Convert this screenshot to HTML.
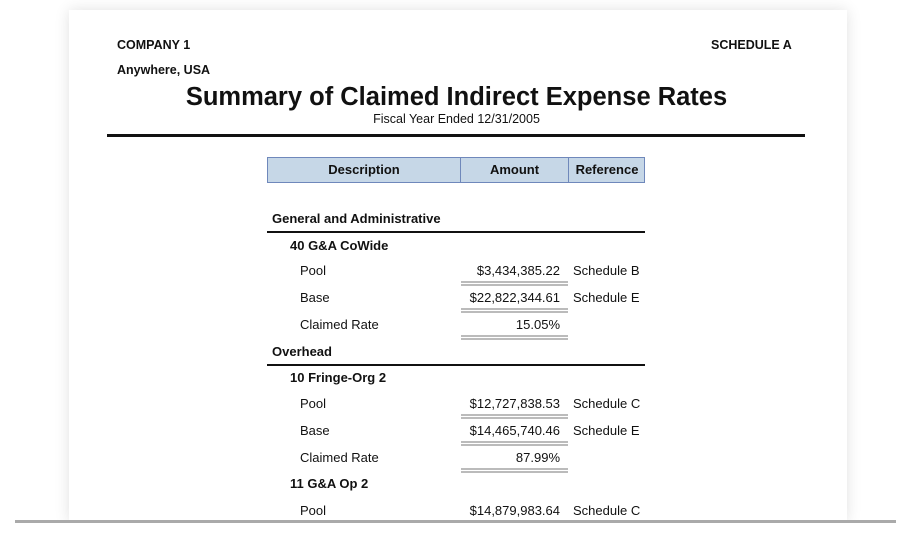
<!DOCTYPE html>
<html><head><style>
*{margin:0;padding:0}
body{width:915px;height:547px;background:#fff;position:relative;overflow:hidden;font-family:"Liberation Sans",Arial,sans-serif;color:#111}
.card{position:absolute;left:69px;top:10px;width:778px;height:512px;background:#fff;box-shadow:0 0 14px rgba(0,0,0,0.12)}
.t{position:absolute;white-space:nowrap;font-size:13px;line-height:16px}
.b{font-weight:bold}
.r{text-align:right}
.ul{position:absolute;left:461px;width:107px;border-top:2px solid #bbb;border-bottom:2px solid #bbb;height:1px}
.hl{position:absolute;left:267px;width:378px;height:2px;background:#111}
</style></head><body>
<div class="card"></div>
<div class="t b" style="left:117px;top:37px;font-size:12.5px">COMPANY 1</div>
<div class="t b" style="left:711px;top:37px;font-size:12.5px">SCHEDULE A</div>
<div class="t b" style="left:117px;top:62px;font-size:12.5px">Anywhere, USA</div>
<div class="t b" style="left:0;width:913px;text-align:center;top:82px;font-size:25.5px;line-height:30px">Summary of Claimed Indirect Expense Rates</div>
<div class="t" style="left:0;width:913px;text-align:center;top:111px;font-size:12.5px">Fiscal Year Ended 12/31/2005</div>
<div style="position:absolute;left:107px;top:134px;width:698px;height:3px;background:#111"></div>

<div style="position:absolute;left:267px;top:157px;width:376px;height:24px;background:#c6d7e7;border:1px solid #6f88bb"></div>
<div style="position:absolute;left:460px;top:157px;width:1px;height:26px;background:#6f88bb"></div>
<div style="position:absolute;left:568px;top:157px;width:1px;height:26px;background:#6f88bb"></div>
<div class="t b" style="left:267px;width:194px;text-align:center;top:162px">Description</div>
<div class="t b" style="left:461px;width:107px;text-align:center;top:162px">Amount</div>
<div class="t b" style="left:569px;width:76px;text-align:center;top:162px">Reference</div>

<div class="t b" style="left:272px;top:211px">General and Administrative</div>
<div class="hl" style="top:231px"></div>
<div class="t b" style="left:290px;top:238px">40 G&amp;A CoWide</div>
<div class="t" style="left:300px;top:263px">Pool</div>
<div class="t r" style="left:440px;width:120px;top:263px">$3,434,385.22</div>
<div class="t" style="left:573px;top:263px">Schedule B</div>
<div class="ul" style="top:281px"></div>
<div class="t" style="left:300px;top:290px">Base</div>
<div class="t r" style="left:440px;width:120px;top:290px">$22,822,344.61</div>
<div class="t" style="left:573px;top:290px">Schedule E</div>
<div class="ul" style="top:308px"></div>
<div class="t" style="left:300px;top:317px">Claimed Rate</div>
<div class="t r" style="left:440px;width:120px;top:317px">15.05%</div>
<div class="ul" style="top:335px"></div>
<div class="t b" style="left:272px;top:344px">Overhead</div>
<div class="hl" style="top:364px"></div>
<div class="t b" style="left:290px;top:370px">10 Fringe-Org 2</div>
<div class="t" style="left:300px;top:396px">Pool</div>
<div class="t r" style="left:440px;width:120px;top:396px">$12,727,838.53</div>
<div class="t" style="left:573px;top:396px">Schedule C</div>
<div class="ul" style="top:414px"></div>
<div class="t" style="left:300px;top:423px">Base</div>
<div class="t r" style="left:440px;width:120px;top:423px">$14,465,740.46</div>
<div class="t" style="left:573px;top:423px">Schedule E</div>
<div class="ul" style="top:441px"></div>
<div class="t" style="left:300px;top:450px">Claimed Rate</div>
<div class="t r" style="left:440px;width:120px;top:450px">87.99%</div>
<div class="ul" style="top:468px"></div>
<div class="t b" style="left:290px;top:476px">11 G&amp;A Op 2</div>
<div class="t" style="left:300px;top:503px">Pool</div>
<div class="t r" style="left:440px;width:120px;top:503px">$14,879,983.64</div>
<div class="t" style="left:573px;top:503px">Schedule C</div>

<div style="position:absolute;left:0;top:521px;width:915px;height:30px;background:#fff"></div>
<div style="position:absolute;left:15px;top:520px;width:881px;height:3px;background:#aaa"></div>
</body></html>
